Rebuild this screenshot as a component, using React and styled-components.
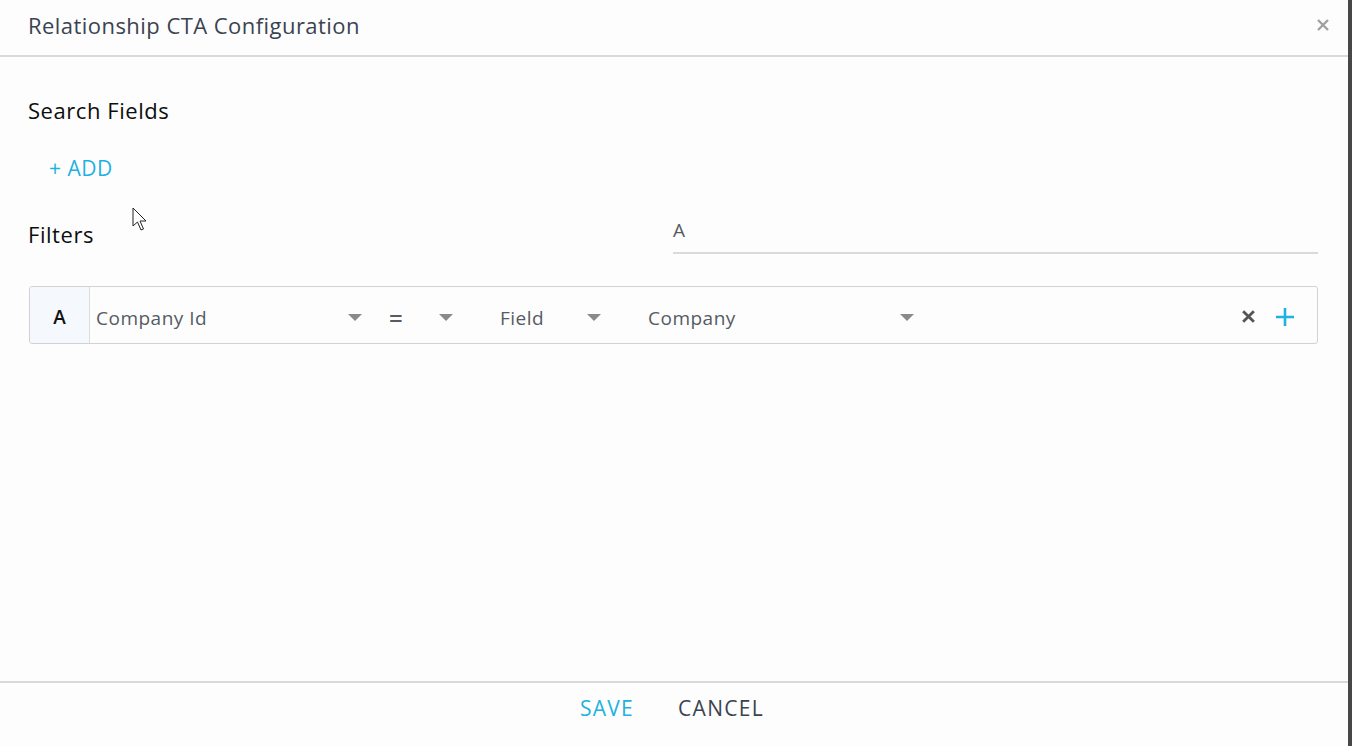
import React from "react";
import styled, { createGlobalStyle } from "styled-components";

const Global = createGlobalStyle`
  html, body { margin: 0; padding: 0; background: #fdfdfd; }
  body { font-family: "Open Sans", Lato, sans-serif; }
  #root { width: 1352px; height: 746px; }
`;

const Page = styled.div`
  display: flex;
  width: 1352px;
  height: 746px;
  position: relative;
  overflow: hidden;
`;

const Modal = styled.div`
  flex: 1;
  display: flex;
  flex-direction: column;
  background: #fdfdfd;
`;

const Edge = styled.div`
  width: 4px;
  background: #474747;
`;

const Header = styled.div`
  height: 55px;
  display: flex;
  align-items: center;
  justify-content: space-between;
  padding: 0 18px 0 28px;
  border-bottom: 2px solid #d9d9d9;
`;

const Title = styled.div`
  font-size: 22px;
  letter-spacing: 0.45px;
  font-weight: 500;
  color: #3b4350;
  margin-top: -5px;
`;

const CloseBtn = styled.div`
  color: #a0a0a0;
  display: flex;
  margin-top: -6px;
`;

const Body = styled.div`
  flex: 1;
  padding: 40px 30px 0 28px;
  display: flex;
  flex-direction: column;
`;

const SectionLabel = styled.div`
  font-size: 22px;
  letter-spacing: 0.55px;
  line-height: 26px;
  color: #0d0d0d;
`;

const AddLink = styled.div`
  font-size: 21px;
  letter-spacing: 0.5px;
  line-height: 24px;
  color: #1eb1e2;
  margin: 33px 0 0 21px;
`;

const FilterHead = styled.div`
  display: grid;
  grid-template-columns: 1fr 1fr;
  margin-top: 41px;
  align-items: start;
`;

const ExprInput = styled.div`
  font-size: 19px;
  letter-spacing: 0.5px;
  line-height: 24px;
  color: #555b63;
  padding: 0 0 10px 0;
  border-bottom: 2px solid #dadada;
  margin-top: -3px;
`;

const FilterRow = styled.div`
  margin-top: 32px;
  height: 56px;
  border: 1px solid #d2d2d2;
  border-radius: 3px;
  display: flex;
  align-items: stretch;
  margin-left: 1px;
`;

const KeyCell = styled.div`
  width: 60px;
  background: #f5f8fc;
  border-right: 1px solid #dcdcdc;
  display: flex;
  align-items: center;
  justify-content: center;
  padding-top: 3px;
  box-sizing: border-box;
  font-size: 19px;
  font-weight: 600;
  color: #111;
  border-radius: 3px 0 0 3px;
`;

const Select = styled.div`
  width: ${(p) => p.$w}px;
  padding: 5px 12px 0 ${(p) => p.$pl}px;
  box-sizing: border-box;
  display: flex;
  align-items: center;
  justify-content: space-between;
  font-size: ${(p) => p.$fs || 19}px;
  font-weight: ${(p) => p.$fw || 400};
  letter-spacing: 0.5px;
  color: #555b63;
`;

const Arrow = styled.span`
  width: 0;
  height: 0;
  border-left: 7px solid transparent;
  border-right: 7px solid transparent;
  border-top: 7px solid #8a8a8a;
`;

const Spacer = styled.div`
  flex: 1;
`;

const Actions = styled.div`
  display: flex;
  align-items: center;
  gap: 19px;
  padding: 3px 22px 0 0;
`;

const IconBtn = styled.span`
  display: flex;
  color: ${(p) => p.$color};
`;

const Footer = styled.div`
  height: 63px;
  border-top: 2px solid #d9d9d9;
  display: flex;
  justify-content: center;
  align-items: center;
  gap: 44px;
  padding-right: 4px;
`;

const FooterBtn = styled.div`
  font-size: 21px;
  letter-spacing: 1.3px;
  color: ${(p) => p.$color};
  margin-top: -13px;
`;

const Cursor = styled.svg`
  position: absolute;
  left: 132px;
  top: 207px;
`;

const X = ({ size, w }) => (
  <svg width={size} height={size} viewBox="0 0 14 14">
    <path d="M2 2L12 12M12 2L2 12" stroke="currentColor" strokeWidth={w} strokeLinecap="butt" />
  </svg>
);

const Plus = () => (
  <svg width="20" height="20" viewBox="0 0 20 20">
    <path d="M10 1V19M1 10H19" stroke="currentColor" strokeWidth="2.6" />
  </svg>
);

export default function App() {
  return (
    <Page>
      <Global />
      <Modal>
        <Header>
          <Title>Relationship CTA Configuration</Title>
          <CloseBtn>
            <X size={14} w={2.4} />
          </CloseBtn>
        </Header>
        <Body>
          <SectionLabel>Search Fields</SectionLabel>
          <AddLink>+ ADD</AddLink>
          <FilterHead>
            <SectionLabel>Filters</SectionLabel>
            <ExprInput>A</ExprInput>
          </FilterHead>
          <FilterRow>
            <KeyCell>A</KeyCell>
            <Select $w={284} $pl={6}>
              <span>Company Id</span>
              <Arrow />
            </Select>
            <Select $w={91} $pl={15} $fs={24} $fw={600}>
              <span>=</span>
              <Arrow />
            </Select>
            <Select $w={148} $pl={35}>
              <span>Field</span>
              <Arrow />
            </Select>
            <Select $w={313} $pl={35}>
              <span>Company</span>
              <Arrow />
            </Select>
            <Spacer />
            <Actions>
              <IconBtn $color="#555">
                <X size={15} w={2.6} />
              </IconBtn>
              <IconBtn $color="#1eb1e2">
                <Plus />
              </IconBtn>
            </Actions>
          </FilterRow>
        </Body>
        <Footer>
          <FooterBtn $color="#1eb1e2">SAVE</FooterBtn>
          <FooterBtn $color="#3b4350">CANCEL</FooterBtn>
        </Footer>
      </Modal>
      <Edge />
      <Cursor width="16" height="26" viewBox="0 0 16 26">
        <path d="M1 1V19L5.5 15L9 23L11.5 22L8 14H14Z" fill="#fff" stroke="#222" strokeWidth="1" strokeLinejoin="round" />
      </Cursor>
    </Page>
  );
}
